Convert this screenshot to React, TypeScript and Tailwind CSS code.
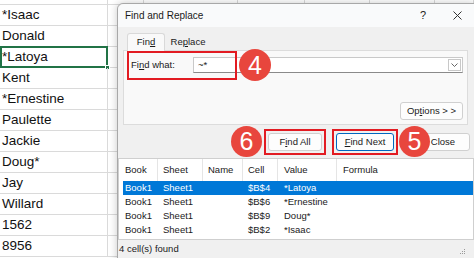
import React from "react";

const names = [
  "*Isaac",
  "Donald",
  "*Latoya",
  "Kent",
  "*Ernestine",
  "Paulette",
  "Jackie",
  "Doug*",
  "Jay",
  "Willard",
  "1562",
  "8956",
];

// widths of the sheet columns behind the dialog
const sheetCols = [37, 97, 68, 67, 67, 40];

const results = [
  { book: "Book1", sheet: "Sheet1", name: "", cell: "$B$4", value: "*Latoya" },
  { book: "Book1", sheet: "Sheet1", name: "", cell: "$B$6", value: "*Ernestine" },
  { book: "Book1", sheet: "Sheet1", name: "", cell: "$B$9", value: "Doug*" },
  { book: "Book1", sheet: "Sheet1", name: "", cell: "$B$2", value: "*Isaac" },
];

function Badge({ n, className }: { n: string; className: string }) {
  return (
    <div
      className={`absolute flex items-center justify-center rounded-full bg-[#e8463d] text-[25px] leading-none text-white ${className}`}
    >
      {n}
    </div>
  );
}

function SheetRow({ text, selected }: { text: string; selected?: boolean }) {
  return (
    <div className="flex h-[21px] border-b border-[#dadada]">
      <div className="relative flex w-[111px] items-center border-r border-[#dadada] pl-[2px] text-[13.5px] text-[#111]">
        {text}
        {selected && (
          <>
            <div className="absolute -top-px left-0 right-[-1px] bottom-[-1px] border-2 border-[#217346]" />
            <div className="absolute bottom-[-3px] right-[-3px] h-[5px] w-[5px] border border-white bg-[#217346]" />
          </>
        )}
      </div>
      {sheetCols.map((w, i) => (
        <div key={i} className="border-r border-[#dadada]" style={{ width: w }} />
      ))}
    </div>
  );
}

function Btn({
  children,
  className = "",
}: {
  children: React.ReactNode;
  className?: string;
}) {
  return (
    <div
      className={`flex h-[18px] items-center justify-center rounded-[3px] border bg-[#fdfdfd] text-[9.5px] text-[#1a1a1a] ${className}`}
    >
      {children}
    </div>
  );
}

export default function App() {
  return (
    <div className="relative h-[258px] w-[474px] overflow-hidden bg-white font-['Liberation_Sans',Arial,sans-serif]">
      {/* Spreadsheet */}
      <div className="flex flex-col">
        <div className="flex h-[5px] border-b border-[#dadada]">
          <div className="w-[111px] border-r border-[#dadada]" />
          {sheetCols.map((w, i) => (
            <div key={i} className="border-r border-[#dadada]" style={{ width: w }} />
          ))}
        </div>
        {names.map((n, i) => (
          <SheetRow key={i} text={n} selected={i === 2} />
        ))}
      </div>

      {/* Find and Replace dialog */}
      <div className="absolute left-[117px] top-[3px] flex h-[262px] w-[358px] flex-col rounded-tl-[6px] border border-[#a8a8a8] bg-[#f0f0f0] text-[9.5px] text-[#1a1a1a] shadow-[0_0_8px_rgba(0,0,0,0.22)]">
        {/* Title bar */}
        <div className="flex h-[23px] items-center rounded-tl-[6px] bg-[#f9fafb] pl-[7px] pr-[12px]">
          <span className="text-[10px]">Find and Replace</span>
          <span className="ml-auto mr-[27px] text-[11px]">?</span>
          <svg width="9" height="9" viewBox="0 0 9 9">
            <path d="M0.5 0.5 L8.5 8.5 M8.5 0.5 L0.5 8.5" stroke="#333" strokeWidth="1" />
          </svg>
        </div>

        {/* Tabs */}
        <div className="ml-[9px] mt-[6px] flex h-[18px]">
          <div className="relative z-10 flex w-[38px] items-center justify-center rounded-t-[3px] border border-b-0 border-[#d9d9d9] bg-[#f9f9f9]">
            <span>
              Fin<span className="underline">d</span>
            </span>
          </div>
          <div className="flex w-[46px] items-center justify-center">
            <span>
              Re<span className="underline">p</span>lace
            </span>
          </div>
        </div>

        {/* Tab panel */}
        <div className="relative ml-[5px] mt-[-1px] flex h-[75px] w-[345px] flex-col border border-[#dcdcdc] bg-[#f9f9f9] pl-[7px] pr-[4px] pt-[6px]">
          <div className="flex h-[16px] items-center">
            <div className="w-[62px]">
              Fi<span className="underline">n</span>d what:
            </div>
            <div className="flex h-[16px] flex-1 items-center border border-[#c9c9c9] border-b-[#8a8a8a] bg-white pl-[4px]">
              <span>~*</span>
              <div className="ml-auto mr-[1px] flex h-[12px] w-[13px] items-center justify-center border border-[#c8c8c8]">
                <svg width="7" height="4" viewBox="0 0 7 4">
                  <path d="M0.5 0.5 L3.5 3.5 L6.5 0.5" stroke="#555" strokeWidth="0.9" fill="none" />
                </svg>
              </div>
            </div>
          </div>
          <div className="mt-[29px] flex justify-end">
            <Btn className="h-[15px] w-[63px] border-[#d0d0d0]">
              Op<span className="underline">t</span>ions &gt; &gt;
            </Btn>
          </div>
          {/* red highlight */}
          <div className="absolute left-[3px] top-[0px] h-[29px] w-[110px] border-2 border-[#e21b22]" />
        </div>

        {/* Buttons */}
        <div className="ml-[146px] mt-[4px] flex h-[26px] items-center">
          <div className="border-2 border-[#e21b22] p-[2px]">
            <Btn className="w-[54px] border-[#d0d0d0]">
              F<span className="underline">i</span>nd All
            </Btn>
          </div>
          <div className="ml-[6px] border-2 border-[#e21b22] p-[2px]">
            <Btn className="w-[58px] border-[#0067c0]">
              <span className="underline">F</span>ind Next
            </Btn>
          </div>
          <Btn className="ml-[18px] w-[54px] border-[#d0d0d0]">Close</Btn>
        </div>

        {/* Results list */}
        <div className="mt-[3px] flex h-[82px] flex-col border border-[#cfcfcf] bg-white pl-[4px]">
          <div className="flex h-[22px] text-[9.5px]">
            <div className="flex w-[35px] items-center border-r border-[#e5e5e5] pl-[2px]">Book</div>
            <div className="flex w-[45px] items-center border-r border-[#e5e5e5] pl-[5px]">Sheet</div>
            <div className="flex w-[40px] items-center border-r border-[#e5e5e5] pl-[5px]">Name</div>
            <div className="flex w-[35px] items-center border-r border-[#e5e5e5] pl-[5px]">Cell</div>
            <div className="flex w-[59px] items-center border-r border-[#e5e5e5] pl-[6px]">Value</div>
            <div className="flex flex-1 items-center pl-[6px]">Formula</div>
          </div>
          {results.map((r, i) => (
            <div
              key={i}
              className={`flex h-[14px] items-center text-[9.5px] ${
                i === 0 ? "bg-[#0078d7] text-white" : "text-[#1a1a1a]"
              }`}
            >
              <div className="w-[35px] pl-[2px]">{r.book}</div>
              <div className="w-[45px] pl-[5px]">{r.sheet}</div>
              <div className="w-[40px] pl-[5px]">{r.name}</div>
              <div className="w-[35px] pl-[5px]">{r.cell}</div>
              <div className="w-[59px] pl-[6px]">{r.value}</div>
              <div className="flex-1 pl-[6px]" />
            </div>
          ))}
        </div>

        {/* Status bar */}
        <div className="flex h-[18px] items-center bg-[#f0f0f0] pl-[1px]">
          <span>4 cell(s) found</span>
          <svg className="ml-auto mr-[8px] mt-[6px]" width="6" height="6" viewBox="0 0 6 6">
            <rect x="4" y="0" width="1" height="1" fill="#999" />
            <rect x="2" y="2" width="1" height="1" fill="#999" />
            <rect x="4" y="2" width="1" height="1" fill="#999" />
            <rect x="0" y="4" width="1" height="1" fill="#999" />
            <rect x="2" y="4" width="1" height="1" fill="#999" />
            <rect x="4" y="4" width="1" height="1" fill="#999" />
          </svg>
        </div>
      </div>

      {/* Numbered callouts */}
      <Badge n="4" className="left-[239px] top-[49px] h-[32px] w-[32px]" />
      <Badge n="6" className="left-[231px] top-[126px] h-[31px] w-[31px]" />
      <Badge n="5" className="left-[399px] top-[126px] h-[31px] w-[31px]" />
    </div>
  );
}
